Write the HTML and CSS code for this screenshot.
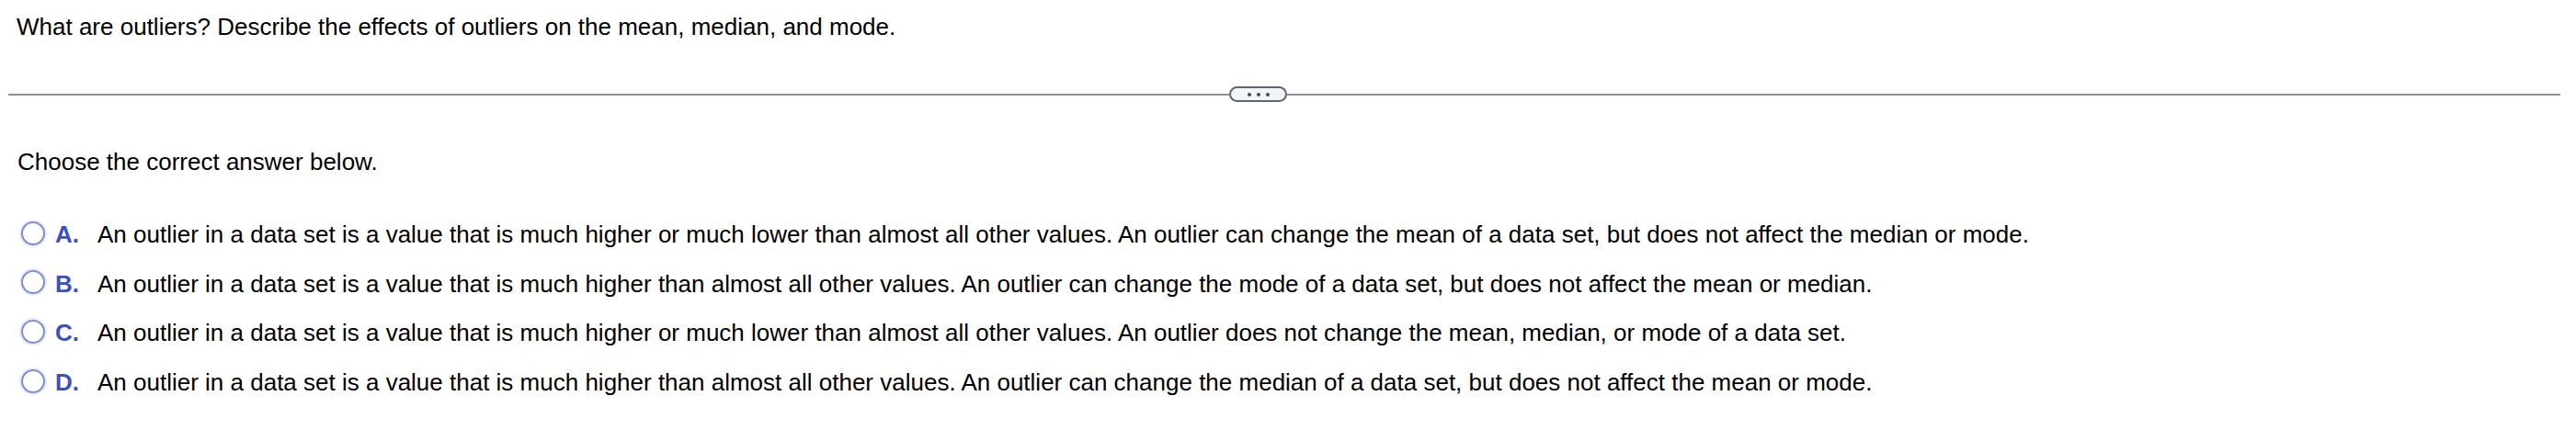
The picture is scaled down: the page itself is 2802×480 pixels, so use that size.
FILE: index.html
```html
<!DOCTYPE html>
<html>
<head>
<meta charset="utf-8">
<link rel="stylesheet" href="styles.css">
</head>
<body>
<div class="question">What are outliers? Describe the effects of outliers on the mean, median, and mode.</div>
<div class="divider">
  <span class="rule rule-left"></span>
  <span class="pill"><i></i><i></i><i></i></span>
  <span class="rule rule-right"></span>
</div>
<div class="prompt">Choose the correct answer below.</div>
<ul class="options">
  <li class="option"><span class="radio"></span><span class="letter">A.</span><span class="text">An outlier in a data set is a value that is much higher or much lower than almost all other values. An outlier can change the mean of a data set, but does not affect the median or mode.</span></li>
  <li class="option"><span class="radio"></span><span class="letter">B.</span><span class="text">An outlier in a data set is a value that is much higher than almost all other values. An outlier can change the mode of a data set, but does not affect the mean or median.</span></li>
  <li class="option"><span class="radio"></span><span class="letter">C.</span><span class="text">An outlier in a data set is a value that is much higher or much lower than almost all other values. An outlier does not change the mean, median, or mode of a data set.</span></li>
  <li class="option"><span class="radio"></span><span class="letter">D.</span><span class="text">An outlier in a data set is a value that is much higher than almost all other values. An outlier can change the median of a data set, but does not affect the mean or mode.</span></li>
</ul>
</body>
</html>
```
FILE: styles.css
```css
html, body {
  margin: 0;
  padding: 0;
  background: #ffffff;
}
body {
  font-family: "Liberation Sans", Arial, sans-serif;
  font-size: 26px;
  line-height: 31px;
  color: #000000;
}
.question {
  padding: 14px 0 0 18px;
  white-space: nowrap;
}
.divider {
  display: flex;
  align-items: center;
  height: 17px;
  margin: 49px 17px 0 9px;
}
.rule {
  height: 2px;
  background: #8a909c;
}
.rule-left {
  flex: 0 0 1328px;
}
.rule-right {
  flex: 1 1 auto;
}
.pill {
  box-sizing: border-box;
  width: 63px;
  height: 17px;
  border: 2px solid #5c6776;
  border-radius: 9px;
  background: #f3f4f6;
  display: flex;
  align-items: center;
  justify-content: center;
  gap: 6px;
}
.pill i {
  width: 4px;
  height: 4px;
  border-radius: 50%;
  background: #464b53;
}
.prompt {
  margin-top: 50px;
  padding-left: 19px;
  white-space: nowrap;
}
.options {
  list-style: none;
  margin: 48px 0 0 0;
  padding: 0;
  display: flex;
  flex-direction: column;
  gap: 22.7px;
}
.option {
  display: flex;
  align-items: center;
  height: 31px;
  padding-left: 23px;
  white-space: nowrap;
}
.radio {
  box-sizing: border-box;
  flex: 0 0 auto;
  width: 26px;
  height: 26px;
  border: 2px solid #7b8cd8;
  border-radius: 50%;
  box-shadow: 0 0 0 2px rgba(190, 198, 240, 0.35);
  margin-top: -4px;
}
.letter {
  margin-left: 11px;
  width: 46px;
  font-weight: bold;
  color: #3b50c1;
}
.text {
  color: #000000;
}
```
